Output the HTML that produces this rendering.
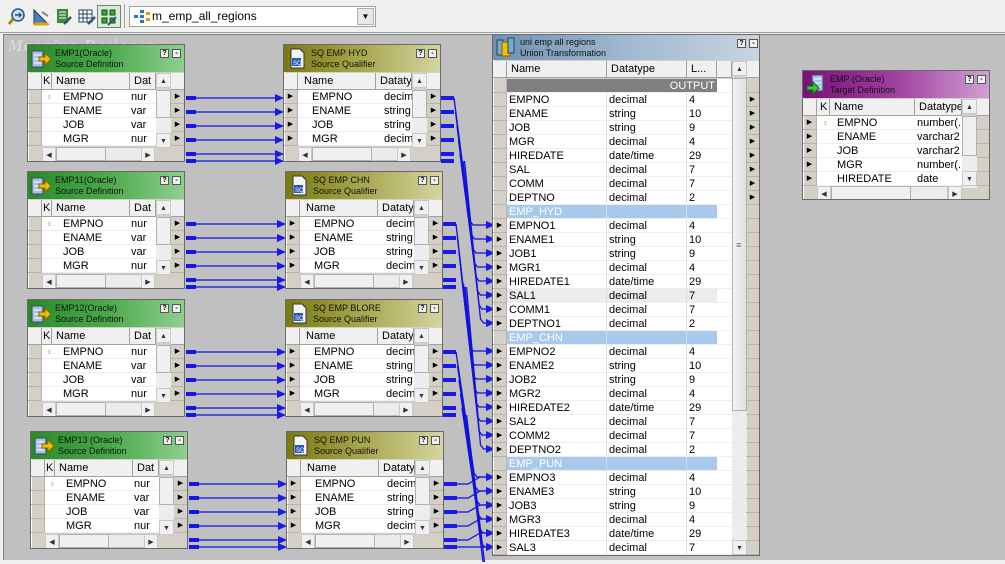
<!DOCTYPE html>
<html><head><meta charset="utf-8">
<style>
*{margin:0;padding:0;box-sizing:border-box}
body{width:1005px;height:564px;overflow:hidden;background:#f0f0f0;font-family:"Liberation Sans",sans-serif;position:relative}
.tb{position:absolute;left:0;top:0;width:1005px;height:33px;background:#f0f0f0;border-bottom:1px solid #a0a0a0}
.ico{position:absolute;top:8px;width:18px;height:18px}
.combo{position:absolute;left:129px;top:6px;width:247px;height:21px;background:#fff;border:1px solid #a0a0a0;font-size:12px;line-height:19px;padding-left:22px}
.combo .dd{position:absolute;right:1px;top:1px;width:17px;height:17px;background:#e8e8e8;border:1px solid #b0b0b0;font-size:8px;text-align:center;line-height:15px}
.cv{position:absolute;left:3px;top:34px;width:1002px;height:526px;background:#c0c0c0;border-left:1px solid #808080;border-top:1px solid #808080}
.wm{position:absolute;left:8px;top:36px;font:italic bold 17px "Liberation Serif",serif;color:#d8d8d8;letter-spacing:1px}
.box{position:absolute;width:158px;height:118px;background:#d4d0c8;border:1px solid #6a6a6a;box-shadow:inset 1px 1px 0 #fff;overflow:hidden}
.hd{position:absolute;left:0;top:0;right:0;height:27px;font-size:9px;line-height:11px;padding:3px 0 0 27px;color:#111}
.src{background:linear-gradient(90deg,#2a8a2a,#4aa84a 50%,#8fcf8f)}
.sq{background:linear-gradient(90deg,#7a7a10,#a8a850 50%,#d4d4a0)}
.un{background:linear-gradient(90deg,#7090b0,#a0b8d0 50%,#c8d4e0)}
.tg{background:linear-gradient(90deg,#7a107a,#a040a0 50%,#d0a0d0)}
.hi{position:absolute;left:3px;top:3px;width:20px;height:21px}
.q{position:absolute;top:4px;width:9px;height:9px;background:#f0f0f0;border:1px solid #555;font:bold 7px/7px "Liberation Sans",sans-serif;text-align:center;color:#000}
.ch{position:absolute;top:28px;height:17px;background:#f0f0f0;border-right:1px solid #a0a0a0;border-bottom:1px solid #a0a0a0;font-size:11px;line-height:16px;padding-left:4px;overflow:hidden;white-space:nowrap}
.r{position:absolute;left:0;height:14px;font-size:11px;line-height:14px;white-space:nowrap}
.w{position:absolute;top:0;height:14px;background:#fff;border-bottom:1px solid #eee;overflow:hidden}
.pa{position:absolute;top:0;width:14px;height:14px;font-size:7px;line-height:14px;text-align:center;color:#000;border-bottom:1px solid #b8b4ac;border-right:1px solid #b8b4ac}
.vs{position:absolute;width:15px;background:repeating-linear-gradient(45deg,#f4f4f4 0 1px,#e4e4e4 1px 2px)}
.th{position:absolute;left:0;width:15px;background:#f0f0f0;border:1px solid #b0b0b0}
.ar{position:absolute;width:15px;height:15px;background:#f0f0f0;font-size:7px;line-height:15px;text-align:center;color:#333;border:1px solid #c8c8c8}
.hs{position:absolute;height:14px;background:repeating-linear-gradient(45deg,#f4f4f4 0 1px,#e4e4e4 1px 2px);border:1px solid #c0c0c0}
.n{position:absolute;top:0}
</style></head><body>
<div class="tb">
 <svg class="ico" style="left:8px" viewBox="0 0 18 18"><circle cx="10" cy="7" r="6" fill="#cde" stroke="#258" stroke-width="1.5"/><path d="M7 7h6M11 5l2 2-2 2" stroke="#258" fill="none" stroke-width="1.5"/><path d="M5 11l-4 5" stroke="#a80" stroke-width="3"/></svg>
 <svg class="ico" style="left:32px" viewBox="0 0 18 18"><path d="M2 2v14h14z" fill="#4a7cc8" stroke="#235"/><path d="M2 16h14" stroke="#d9a400" stroke-width="3"/><path d="M10 4l6 4" stroke="#888" stroke-width="2"/></svg>
 <svg class="ico" style="left:55px" viewBox="0 0 18 18"><rect x="2" y="1" width="11" height="14" fill="#3a8a3a"/><path d="M4 4h7M4 7h7M4 10h7" stroke="#fff"/><path d="M9 16l7-7" stroke="#357" stroke-width="2.5"/></svg>
 <svg class="ico" style="left:78px" viewBox="0 0 18 18"><rect x="1" y="2" width="13" height="12" fill="#fff" stroke="#246"/><path d="M1 6h13M1 10h13M5 2v12M9 2v12" stroke="#246"/><path d="M10 16l7-7" stroke="#357" stroke-width="2.5"/></svg>
 <div style="position:absolute;left:97px;top:5px;width:24px;height:23px;border:1px solid #6a8a6a;background:#dfe8df"></div>
 <svg class="ico" style="left:100px" viewBox="0 0 18 18"><rect x="2" y="2" width="5" height="5" fill="#3a3" stroke="#151"/><rect x="10" y="2" width="5" height="5" fill="#3a3" stroke="#151"/><rect x="2" y="10" width="5" height="5" fill="#3a3" stroke="#151"/><rect x="10" y="10" width="5" height="5" fill="#3a3" stroke="#151"/><path d="M8 17l8-8" stroke="#357" stroke-width="2"/></svg>
 <div style="position:absolute;left:124px;top:4px;width:1px;height:24px;background:#a0a0a0"></div>
 <div class="combo"><svg style="position:absolute;left:4px;top:3px" width="16" height="13" viewBox="0 0 16 13"><rect x="0" y="5" width="4" height="3" fill="#27c"/><rect x="6" y="0" width="4" height="3" fill="#27c"/><rect x="6" y="5" width="4" height="3" fill="#27c"/><rect x="6" y="10" width="4" height="3" fill="#27c"/><rect x="12" y="2" width="4" height="3" fill="#d90"/><rect x="12" y="8" width="4" height="3" fill="#d90"/></svg>m_emp_all_regions<div class="dd">▼</div></div>
</div>
<div class="cv"></div>
<div class="wm">Mapping Designer</div>

<!-- lines -->
<svg id="ln" style="position:absolute;left:0;top:0" width="1005" height="564">
<defs><marker id="a" markerWidth="9" markerHeight="8" refX="8" refY="4" orient="auto" markerUnits="userSpaceOnUse"><path d="M0 0L9 4L0 8z" fill="#1a1ae8"/></marker></defs>
<g stroke="#1a1ae8" stroke-width="4">
<path d="M186 98h10M186 112h10M186 126h10M186 140h10M186 154h10M186 161h10M186 224h10M186 238h10M186 252h10M186 266h10M186 280h10M186 287h10M186 352h10M186 366h10M186 380h10M186 394h10M186 408h10M186 415h10M189 484h10M189 498h10M189 512h10M189 526h10M189 540h10M189 547h10"/>
<path d="M441 98h13M441 112h13M441 126h13M441 140h13M441 154h13M441 161h13M443 224h13M443 238h13M443 252h13M443 266h13M443 280h13M443 287h13M443 352h13M443 366h13M443 380h13M443 394h13M443 408h13M443 415h13M444 484h13M444 498h13M444 512h13M444 526h13M444 540h13M444 547h13"/>
</g>
<g id="lg" stroke="#1010e0" stroke-width="1.3" fill="none"></g>
</svg>

<!-- SOURCE boxes -->
<div class="box" style="left:27px;top:44px">
 <div class="hd src"><svg class="hi" viewBox="0 0 20 21"><rect x="1" y="3" width="11" height="16" fill="#a8c0e8" stroke="#446"/><path d="M3 7h7M3 11h7M3 15h7" stroke="#fff"/><path d="M8 9h6V5l6 6-6 6v-4H8z" fill="#f0c000" stroke="#860"/></svg>EMP1(Oracle)<br>Source Definition<div class="q" style="left:132px">?</div><div class="q" style="left:144px">-</div></div>
 <div class="ch" style="left:0;width:14px"></div><div class="ch" style="left:14px;width:10px;padding-left:1px">K</div><div class="ch" style="left:24px;width:78px">Name</div><div class="ch" style="left:102px;width:26px">Dat</div><div class="ch" style="left:143px;width:15px"></div>
 <div class="vs" style="left:128px;top:45px;height:58px"></div><div class="ar" style="left:128px;top:28px">▲</div><div class="th" style="left:128px;top:45px;height:28px"></div><div class="ar" style="left:128px;top:88px">▼</div>
 <div class="r" style="top:45px"><div class="pa" style="left:0"></div><div class="w" style="left:14px;width:114px"><span class="n" style="left:4px;color:#b90;font-size:9px">♀</span><span class="n" style="left:21px">EMPNO</span><span class="n" style="left:89px">nur</span></div><div class="pa" style="left:143px">▶</div></div>
 <div class="r" style="top:59px"><div class="pa" style="left:0"></div><div class="w" style="left:14px;width:114px"><span class="n" style="left:21px">ENAME</span><span class="n" style="left:89px">var</span></div><div class="pa" style="left:143px">▶</div></div>
 <div class="r" style="top:73px"><div class="pa" style="left:0"></div><div class="w" style="left:14px;width:114px"><span class="n" style="left:21px">JOB</span><span class="n" style="left:89px">var</span></div><div class="pa" style="left:143px">▶</div></div>
 <div class="r" style="top:87px"><div class="pa" style="left:0"></div><div class="w" style="left:14px;width:114px"><span class="n" style="left:21px">MGR</span><span class="n" style="left:89px">nur</span></div><div class="pa" style="left:143px">▶</div></div>
 <div class="ar" style="left:14px;top:102px;width:14px">◀</div><div class="hs" style="left:28px;top:102px;width:86px"></div><div style="position:absolute;left:28px;top:102px;width:50px;height:14px;background:#f0f0f0;border:1px solid #b0b0b0"></div><div class="ar" style="left:113px;top:102px;width:14px">▶</div>
</div>

<div class="box" style="left:27px;top:171px">
 <div class="hd src"><svg class="hi" viewBox="0 0 20 21"><rect x="1" y="3" width="11" height="16" fill="#a8c0e8" stroke="#446"/><path d="M3 7h7M3 11h7M3 15h7" stroke="#fff"/><path d="M8 9h6V5l6 6-6 6v-4H8z" fill="#f0c000" stroke="#860"/></svg>EMP11(Oracle)<br>Source Definition<div class="q" style="left:132px">?</div><div class="q" style="left:144px">-</div></div>
 <div class="ch" style="left:0;width:14px"></div><div class="ch" style="left:14px;width:10px;padding-left:1px">K</div><div class="ch" style="left:24px;width:78px">Name</div><div class="ch" style="left:102px;width:26px">Dat</div><div class="ch" style="left:143px;width:15px"></div>
 <div class="vs" style="left:128px;top:45px;height:58px"></div><div class="ar" style="left:128px;top:28px">▲</div><div class="th" style="left:128px;top:45px;height:28px"></div><div class="ar" style="left:128px;top:88px">▼</div>
 <div class="r" style="top:45px"><div class="pa" style="left:0"></div><div class="w" style="left:14px;width:114px"><span class="n" style="left:4px;color:#b90;font-size:9px">♀</span><span class="n" style="left:21px">EMPNO</span><span class="n" style="left:89px">nur</span></div><div class="pa" style="left:143px">▶</div></div>
 <div class="r" style="top:59px"><div class="pa" style="left:0"></div><div class="w" style="left:14px;width:114px"><span class="n" style="left:21px">ENAME</span><span class="n" style="left:89px">var</span></div><div class="pa" style="left:143px">▶</div></div>
 <div class="r" style="top:73px"><div class="pa" style="left:0"></div><div class="w" style="left:14px;width:114px"><span class="n" style="left:21px">JOB</span><span class="n" style="left:89px">var</span></div><div class="pa" style="left:143px">▶</div></div>
 <div class="r" style="top:87px"><div class="pa" style="left:0"></div><div class="w" style="left:14px;width:114px"><span class="n" style="left:21px">MGR</span><span class="n" style="left:89px">nur</span></div><div class="pa" style="left:143px">▶</div></div>
 <div class="ar" style="left:14px;top:102px;width:14px">◀</div><div class="hs" style="left:28px;top:102px;width:86px"></div><div style="position:absolute;left:28px;top:102px;width:50px;height:14px;background:#f0f0f0;border:1px solid #b0b0b0"></div><div class="ar" style="left:113px;top:102px;width:14px">▶</div>
</div>

<div class="box" style="left:27px;top:299px">
 <div class="hd src"><svg class="hi" viewBox="0 0 20 21"><rect x="1" y="3" width="11" height="16" fill="#a8c0e8" stroke="#446"/><path d="M3 7h7M3 11h7M3 15h7" stroke="#fff"/><path d="M8 9h6V5l6 6-6 6v-4H8z" fill="#f0c000" stroke="#860"/></svg>EMP12(Oracle)<br>Source Definition<div class="q" style="left:132px">?</div><div class="q" style="left:144px">-</div></div>
 <div class="ch" style="left:0;width:14px"></div><div class="ch" style="left:14px;width:10px;padding-left:1px">K</div><div class="ch" style="left:24px;width:78px">Name</div><div class="ch" style="left:102px;width:26px">Dat</div><div class="ch" style="left:143px;width:15px"></div>
 <div class="vs" style="left:128px;top:45px;height:58px"></div><div class="ar" style="left:128px;top:28px">▲</div><div class="th" style="left:128px;top:45px;height:28px"></div><div class="ar" style="left:128px;top:88px">▼</div>
 <div class="r" style="top:45px"><div class="pa" style="left:0"></div><div class="w" style="left:14px;width:114px"><span class="n" style="left:4px;color:#b90;font-size:9px">♀</span><span class="n" style="left:21px">EMPNO</span><span class="n" style="left:89px">nur</span></div><div class="pa" style="left:143px">▶</div></div>
 <div class="r" style="top:59px"><div class="pa" style="left:0"></div><div class="w" style="left:14px;width:114px"><span class="n" style="left:21px">ENAME</span><span class="n" style="left:89px">var</span></div><div class="pa" style="left:143px">▶</div></div>
 <div class="r" style="top:73px"><div class="pa" style="left:0"></div><div class="w" style="left:14px;width:114px"><span class="n" style="left:21px">JOB</span><span class="n" style="left:89px">var</span></div><div class="pa" style="left:143px">▶</div></div>
 <div class="r" style="top:87px"><div class="pa" style="left:0"></div><div class="w" style="left:14px;width:114px"><span class="n" style="left:21px">MGR</span><span class="n" style="left:89px">nur</span></div><div class="pa" style="left:143px">▶</div></div>
 <div class="ar" style="left:14px;top:102px;width:14px">◀</div><div class="hs" style="left:28px;top:102px;width:86px"></div><div style="position:absolute;left:28px;top:102px;width:50px;height:14px;background:#f0f0f0;border:1px solid #b0b0b0"></div><div class="ar" style="left:113px;top:102px;width:14px">▶</div>
</div>

<div class="box" style="left:30px;top:431px">
 <div class="hd src"><svg class="hi" viewBox="0 0 20 21"><rect x="1" y="3" width="11" height="16" fill="#a8c0e8" stroke="#446"/><path d="M3 7h7M3 11h7M3 15h7" stroke="#fff"/><path d="M8 9h6V5l6 6-6 6v-4H8z" fill="#f0c000" stroke="#860"/></svg>EMP13 (Oracle)<br>Source Definition<div class="q" style="left:132px">?</div><div class="q" style="left:144px">-</div></div>
 <div class="ch" style="left:0;width:14px"></div><div class="ch" style="left:14px;width:10px;padding-left:1px">K</div><div class="ch" style="left:24px;width:78px">Name</div><div class="ch" style="left:102px;width:26px">Dat</div><div class="ch" style="left:143px;width:15px"></div>
 <div class="vs" style="left:128px;top:45px;height:58px"></div><div class="ar" style="left:128px;top:28px">▲</div><div class="th" style="left:128px;top:45px;height:28px"></div><div class="ar" style="left:128px;top:88px">▼</div>
 <div class="r" style="top:45px"><div class="pa" style="left:0"></div><div class="w" style="left:14px;width:114px"><span class="n" style="left:4px;color:#b90;font-size:9px">♀</span><span class="n" style="left:21px">EMPNO</span><span class="n" style="left:89px">nur</span></div><div class="pa" style="left:143px">▶</div></div>
 <div class="r" style="top:59px"><div class="pa" style="left:0"></div><div class="w" style="left:14px;width:114px"><span class="n" style="left:21px">ENAME</span><span class="n" style="left:89px">var</span></div><div class="pa" style="left:143px">▶</div></div>
 <div class="r" style="top:73px"><div class="pa" style="left:0"></div><div class="w" style="left:14px;width:114px"><span class="n" style="left:21px">JOB</span><span class="n" style="left:89px">var</span></div><div class="pa" style="left:143px">▶</div></div>
 <div class="r" style="top:87px"><div class="pa" style="left:0"></div><div class="w" style="left:14px;width:114px"><span class="n" style="left:21px">MGR</span><span class="n" style="left:89px">nur</span></div><div class="pa" style="left:143px">▶</div></div>
 <div class="ar" style="left:14px;top:102px;width:14px">◀</div><div class="hs" style="left:28px;top:102px;width:86px"></div><div style="position:absolute;left:28px;top:102px;width:50px;height:14px;background:#f0f0f0;border:1px solid #b0b0b0"></div><div class="ar" style="left:113px;top:102px;width:14px">▶</div>
</div>

<!-- SQ boxes -->
<div class="box" style="left:283px;top:44px">
 <div class="hd sq"><svg class="hi" viewBox="0 0 20 21"><path d="M4 1h9l4 4v15H4z" fill="#f4f4f4" stroke="#334"/><rect x="5" y="10" width="9" height="8" fill="#2858b8"/><text x="6" y="17" font-size="6" fill="#fff" font-family="Liberation Sans">SQ</text></svg>SQ EMP HYD<br>Source Qualifier<div class="q" style="left:132px">?</div><div class="q" style="left:144px">-</div></div>
 <div class="ch" style="left:0;width:14px"></div><div class="ch" style="left:14px;width:78px;padding-left:6px">Name</div><div class="ch" style="left:92px;width:36px">Datatype</div><div class="ch" style="left:143px;width:15px"></div>
 <div class="vs" style="left:128px;top:45px;height:58px"></div><div class="ar" style="left:128px;top:28px">▲</div><div class="th" style="left:128px;top:45px;height:28px"></div><div class="ar" style="left:128px;top:88px">▼</div>
 <div class="r" style="top:45px"><div class="pa" style="left:0">▶</div><div class="w" style="left:14px;width:114px"><span class="n" style="left:14px">EMPNO</span><span class="n" style="left:86px">decim</span></div><div class="pa" style="left:143px">▶</div></div>
 <div class="r" style="top:59px"><div class="pa" style="left:0">▶</div><div class="w" style="left:14px;width:114px"><span class="n" style="left:14px">ENAME</span><span class="n" style="left:86px">string</span></div><div class="pa" style="left:143px">▶</div></div>
 <div class="r" style="top:73px"><div class="pa" style="left:0">▶</div><div class="w" style="left:14px;width:114px"><span class="n" style="left:14px">JOB</span><span class="n" style="left:86px">string</span></div><div class="pa" style="left:143px">▶</div></div>
 <div class="r" style="top:87px"><div class="pa" style="left:0">▶</div><div class="w" style="left:14px;width:114px"><span class="n" style="left:14px">MGR</span><span class="n" style="left:86px">decim</span></div><div class="pa" style="left:143px">▶</div></div>
 <div class="ar" style="left:14px;top:102px;width:14px">◀</div><div class="hs" style="left:28px;top:102px;width:86px"></div><div style="position:absolute;left:28px;top:102px;width:60px;height:14px;background:#f0f0f0;border:1px solid #b0b0b0"></div><div class="ar" style="left:113px;top:102px;width:14px">▶</div>
</div>

<div class="box" style="left:285px;top:171px">
 <div class="hd sq"><svg class="hi" viewBox="0 0 20 21"><path d="M4 1h9l4 4v15H4z" fill="#f4f4f4" stroke="#334"/><rect x="5" y="10" width="9" height="8" fill="#2858b8"/><text x="6" y="17" font-size="6" fill="#fff" font-family="Liberation Sans">SQ</text></svg>SQ EMP CHN<br>Source Qualifier<div class="q" style="left:132px">?</div><div class="q" style="left:144px">-</div></div>
 <div class="ch" style="left:0;width:14px"></div><div class="ch" style="left:14px;width:78px;padding-left:6px">Name</div><div class="ch" style="left:92px;width:36px">Datatype</div><div class="ch" style="left:143px;width:15px"></div>
 <div class="vs" style="left:128px;top:45px;height:58px"></div><div class="ar" style="left:128px;top:28px">▲</div><div class="th" style="left:128px;top:45px;height:28px"></div><div class="ar" style="left:128px;top:88px">▼</div>
 <div class="r" style="top:45px"><div class="pa" style="left:0">▶</div><div class="w" style="left:14px;width:114px"><span class="n" style="left:14px">EMPNO</span><span class="n" style="left:86px">decim</span></div><div class="pa" style="left:143px">▶</div></div>
 <div class="r" style="top:59px"><div class="pa" style="left:0">▶</div><div class="w" style="left:14px;width:114px"><span class="n" style="left:14px">ENAME</span><span class="n" style="left:86px">string</span></div><div class="pa" style="left:143px">▶</div></div>
 <div class="r" style="top:73px"><div class="pa" style="left:0">▶</div><div class="w" style="left:14px;width:114px"><span class="n" style="left:14px">JOB</span><span class="n" style="left:86px">string</span></div><div class="pa" style="left:143px">▶</div></div>
 <div class="r" style="top:87px"><div class="pa" style="left:0">▶</div><div class="w" style="left:14px;width:114px"><span class="n" style="left:14px">MGR</span><span class="n" style="left:86px">decim</span></div><div class="pa" style="left:143px">▶</div></div>
 <div class="ar" style="left:14px;top:102px;width:14px">◀</div><div class="hs" style="left:28px;top:102px;width:86px"></div><div style="position:absolute;left:28px;top:102px;width:60px;height:14px;background:#f0f0f0;border:1px solid #b0b0b0"></div><div class="ar" style="left:113px;top:102px;width:14px">▶</div>
</div>

<div class="box" style="left:285px;top:299px">
 <div class="hd sq"><svg class="hi" viewBox="0 0 20 21"><path d="M4 1h9l4 4v15H4z" fill="#f4f4f4" stroke="#334"/><rect x="5" y="10" width="9" height="8" fill="#2858b8"/><text x="6" y="17" font-size="6" fill="#fff" font-family="Liberation Sans">SQ</text></svg>SQ EMP BLORE<br>Source Qualifier<div class="q" style="left:132px">?</div><div class="q" style="left:144px">-</div></div>
 <div class="ch" style="left:0;width:14px"></div><div class="ch" style="left:14px;width:78px;padding-left:6px">Name</div><div class="ch" style="left:92px;width:36px">Datatype</div><div class="ch" style="left:143px;width:15px"></div>
 <div class="vs" style="left:128px;top:45px;height:58px"></div><div class="ar" style="left:128px;top:28px">▲</div><div class="th" style="left:128px;top:45px;height:28px"></div><div class="ar" style="left:128px;top:88px">▼</div>
 <div class="r" style="top:45px"><div class="pa" style="left:0">▶</div><div class="w" style="left:14px;width:114px"><span class="n" style="left:14px">EMPNO</span><span class="n" style="left:86px">decim</span></div><div class="pa" style="left:143px">▶</div></div>
 <div class="r" style="top:59px"><div class="pa" style="left:0">▶</div><div class="w" style="left:14px;width:114px"><span class="n" style="left:14px">ENAME</span><span class="n" style="left:86px">string</span></div><div class="pa" style="left:143px">▶</div></div>
 <div class="r" style="top:73px"><div class="pa" style="left:0">▶</div><div class="w" style="left:14px;width:114px"><span class="n" style="left:14px">JOB</span><span class="n" style="left:86px">string</span></div><div class="pa" style="left:143px">▶</div></div>
 <div class="r" style="top:87px"><div class="pa" style="left:0">▶</div><div class="w" style="left:14px;width:114px"><span class="n" style="left:14px">MGR</span><span class="n" style="left:86px">decim</span></div><div class="pa" style="left:143px">▶</div></div>
 <div class="ar" style="left:14px;top:102px;width:14px">◀</div><div class="hs" style="left:28px;top:102px;width:86px"></div><div style="position:absolute;left:28px;top:102px;width:60px;height:14px;background:#f0f0f0;border:1px solid #b0b0b0"></div><div class="ar" style="left:113px;top:102px;width:14px">▶</div>
</div>

<div class="box" style="left:286px;top:431px">
 <div class="hd sq"><svg class="hi" viewBox="0 0 20 21"><path d="M4 1h9l4 4v15H4z" fill="#f4f4f4" stroke="#334"/><rect x="5" y="10" width="9" height="8" fill="#2858b8"/><text x="6" y="17" font-size="6" fill="#fff" font-family="Liberation Sans">SQ</text></svg>SQ EMP PUN<br>Source Qualifier<div class="q" style="left:132px">?</div><div class="q" style="left:144px">-</div></div>
 <div class="ch" style="left:0;width:14px"></div><div class="ch" style="left:14px;width:78px;padding-left:6px">Name</div><div class="ch" style="left:92px;width:36px">Datatype</div><div class="ch" style="left:143px;width:15px"></div>
 <div class="vs" style="left:128px;top:45px;height:58px"></div><div class="ar" style="left:128px;top:28px">▲</div><div class="th" style="left:128px;top:45px;height:28px"></div><div class="ar" style="left:128px;top:88px">▼</div>
 <div class="r" style="top:45px"><div class="pa" style="left:0">▶</div><div class="w" style="left:14px;width:114px"><span class="n" style="left:14px">EMPNO</span><span class="n" style="left:86px">decim</span></div><div class="pa" style="left:143px">▶</div></div>
 <div class="r" style="top:59px"><div class="pa" style="left:0">▶</div><div class="w" style="left:14px;width:114px"><span class="n" style="left:14px">ENAME</span><span class="n" style="left:86px">string</span></div><div class="pa" style="left:143px">▶</div></div>
 <div class="r" style="top:73px"><div class="pa" style="left:0">▶</div><div class="w" style="left:14px;width:114px"><span class="n" style="left:14px">JOB</span><span class="n" style="left:86px">string</span></div><div class="pa" style="left:143px">▶</div></div>
 <div class="r" style="top:87px"><div class="pa" style="left:0">▶</div><div class="w" style="left:14px;width:114px"><span class="n" style="left:14px">MGR</span><span class="n" style="left:86px">decim</span></div><div class="pa" style="left:143px">▶</div></div>
 <div class="ar" style="left:14px;top:102px;width:14px">◀</div><div class="hs" style="left:28px;top:102px;width:86px"></div><div style="position:absolute;left:28px;top:102px;width:60px;height:14px;background:#f0f0f0;border:1px solid #b0b0b0"></div><div class="ar" style="left:113px;top:102px;width:14px">▶</div>
</div>

<!-- UNION -->
<div class="box" style="left:492px;top:34px;width:268px;height:522px">
 <div class="hd un" style="height:25px;font-size:9px;padding-top:2px"><svg class="hi" style="top:1px" viewBox="0 0 20 21"><rect x="1" y="4" width="6" height="15" fill="#7ac" stroke="#246"/><rect x="6" y="6" width="8" height="14" fill="#f0c000" stroke="#860"/><rect x="12" y="2" width="6" height="15" fill="#7ac" stroke="#246"/></svg>uni emp all regions<br>Union Transformation<div class="q" style="left:244px">?</div><div class="q" style="left:256px">-</div></div>
 <div class="ch" style="left:0;top:26px;width:14px"></div><div class="ch" style="left:14px;top:26px;width:100px">Name</div><div class="ch" style="left:114px;top:26px;width:80px">Datatype</div><div class="ch" style="left:194px;top:26px;width:30px">L...</div><div class="ch" style="left:224px;top:26px;width:15px"></div><div class="ch" style="left:253px;top:26px;width:15px"></div>
 <div class="vs" style="left:239px;top:43px;height:479px"></div><div class="ar" style="left:239px;top:26px">▲</div><div class="th" style="left:239px;top:43px;height:333px;background:linear-gradient(90deg,#f4f4f4,#e0e0e0)"></div><div style="position:absolute;left:243px;top:205px;font-size:9px;color:#666">≡</div><div class="ar" style="left:239px;top:505px">▼</div>
 <div class="r" style="top:44px"><div class="pa" style="left:0"></div><div class="w" style="left:14px;width:210px;background:#808080;color:#fff;text-align:right;padding-right:2px">OUTPUT</div><div class="w" style="left:224px;width:15px"></div><div class="pa" style="left:253px"></div></div>
 <div id="ur"></div>
</div>

<!-- TARGET -->
<div class="box" style="left:802px;top:70px;width:188px;height:130px">
 <div class="hd tg"><svg class="hi" viewBox="0 0 20 21"><rect x="6" y="1" width="11" height="16" fill="#a8c0e8" stroke="#446"/><path d="M8 5h7M8 9h7M8 13h7" stroke="#fff"/><path d="M1 12h6V8l6 6-6 6v-4H1z" fill="#3c3" stroke="#161"/></svg>EMP (Oracle)<br>Target Definition<div class="q" style="left:162px">?</div><div class="q" style="left:174px">-</div></div>
 <div class="ch" style="left:0;width:14px"></div><div class="ch" style="left:14px;width:13px;padding-left:3px">K</div><div class="ch" style="left:27px;width:85px">Name</div><div class="ch" style="left:112px;width:47px">Datatype</div><div class="ch" style="left:174px;width:14px"></div>
 <div class="vs" style="left:159px;top:45px;height:72px"></div><div class="ar" style="left:159px;top:28px">▲</div><div class="th" style="left:159px;top:45px;height:40px"></div><div class="ar" style="left:159px;top:100px">▼</div>
 <div class="r" style="top:45px"><div class="pa" style="left:0">▶</div><div class="w" style="left:14px;width:145px"><span class="n" style="left:5px;color:#b90;font-size:9px">♀</span><span class="n" style="left:20px">EMPNO</span><span class="n" style="left:100px">number(..</span></div><div class="pa" style="left:174px"></div></div>
 <div class="r" style="top:59px"><div class="pa" style="left:0">▶</div><div class="w" style="left:14px;width:145px"><span class="n" style="left:20px">ENAME</span><span class="n" style="left:100px">varchar2</span></div><div class="pa" style="left:174px"></div></div>
 <div class="r" style="top:73px"><div class="pa" style="left:0">▶</div><div class="w" style="left:14px;width:145px"><span class="n" style="left:20px">JOB</span><span class="n" style="left:100px">varchar2</span></div><div class="pa" style="left:174px"></div></div>
 <div class="r" style="top:87px"><div class="pa" style="left:0">▶</div><div class="w" style="left:14px;width:145px"><span class="n" style="left:20px">MGR</span><span class="n" style="left:100px">number(..</span></div><div class="pa" style="left:174px"></div></div>
 <div class="r" style="top:101px"><div class="pa" style="left:0">▶</div><div class="w" style="left:14px;width:145px"><span class="n" style="left:20px">HIREDATE</span><span class="n" style="left:100px">date</span></div><div class="pa" style="left:174px"></div></div>
 <div class="ar" style="left:14px;top:115px;width:14px">◀</div><div class="hs" style="left:28px;top:115px;width:117px"></div><div style="position:absolute;left:28px;top:115px;width:80px;height:14px;background:#f0f0f0;border:1px solid #b0b0b0"></div><div class="ar" style="left:145px;top:115px;width:14px">▶</div>
</div>

<script>
var rows=[];
var base=[["EMPNO","decimal","4"],["ENAME","string","10"],["JOB","string","9"],["MGR","decimal","4"],["HIREDATE","date/time","29"],["SAL","decimal","7"],["COMM","decimal","7"],["DEPTNO","decimal","2"]];
base.forEach(function(b){rows.push([b[0],b[1],b[2],"o"])});
["EMP_HYD","EMP_CHN","EMP_PUN"].forEach(function(g,i){rows.push([g,"","","g"]);base.forEach(function(b){rows.push([b[0]+(i+1),b[1],b[2],"i"])})});
var h="";
rows.slice(0,34).forEach(function(r,k){
 var t=58+k*14;
 var g=r[3]=="g";
 var bg=g?"#a8c8ec":(r[0]=="SAL1"?"#ececec":"#fff");
 var col=g?"#fff":"#000";
 h+='<div class="r" style="top:'+t+'px"><div class="pa" style="left:0">'+(r[3]=="i"?"▶":"")+'</div>'+
 '<div class="w" style="left:14px;width:100px;background:'+bg+';color:'+col+';padding-left:2px;border-right:1px solid #ddd">'+r[0]+'</div>'+
 '<div class="w" style="left:114px;width:80px;background:'+bg+';padding-left:2px;border-right:1px solid #ddd">'+r[1]+'</div>'+
 '<div class="w" style="left:194px;width:30px;background:'+bg+';padding-left:2px">'+r[2]+'</div>'+
 '<div class="w" style="left:224px;width:15px"></div>'+
 '<div class="pa" style="left:253px">'+(r[3]=="o"?"▶":"")+'</div></div>';
});
document.getElementById("ur").innerHTML=h;

var lg=document.getElementById("lg"),s="";
function P(d,m){s+='<path d="'+d+'"'+(m?' marker-end="url(#a)"':'')+'/>';}
// source -> SQ
[[186,283,98],[186,285,224],[186,285,352],[189,286,484]].forEach(function(b){
 [0,14,28,42,56,63].forEach(function(o){P("M"+b[0]+" "+(b[2]+o)+"H"+b[1],1);});
});
// SQ -> union
function ys(t){return [t,t+14,t+28,t+42,t+56,t+60,t+63,t+63];}
function tg(k){return 92+k*14+7;}
[[98,9,454],[224,18,456],[352,27,456]].forEach(function(q){
 var a=ys(q[0]);
 for(var i=0;i<8;i++){var ty=tg(q[1]+i);var x=q[2]+i*1.5;var x2=470+i*1.5+(q[1]==27?4:0);
  if(ty>552){P("M"+x+" "+a[i]+"L"+(x2)+" 562",0);continue;}
  P("M"+x+" "+a[i]+"L"+x2+" "+(ty-4)+"L"+(x2+3)+" "+ty+"H494",1);}
});
[484,498,512,526,540,547].forEach(function(y,i){var ty=tg(27+i);P("M457 "+y+"L468 "+y+"L480 "+ty+"H494",1);});
lg.innerHTML=s;
</script>
</body></html>
